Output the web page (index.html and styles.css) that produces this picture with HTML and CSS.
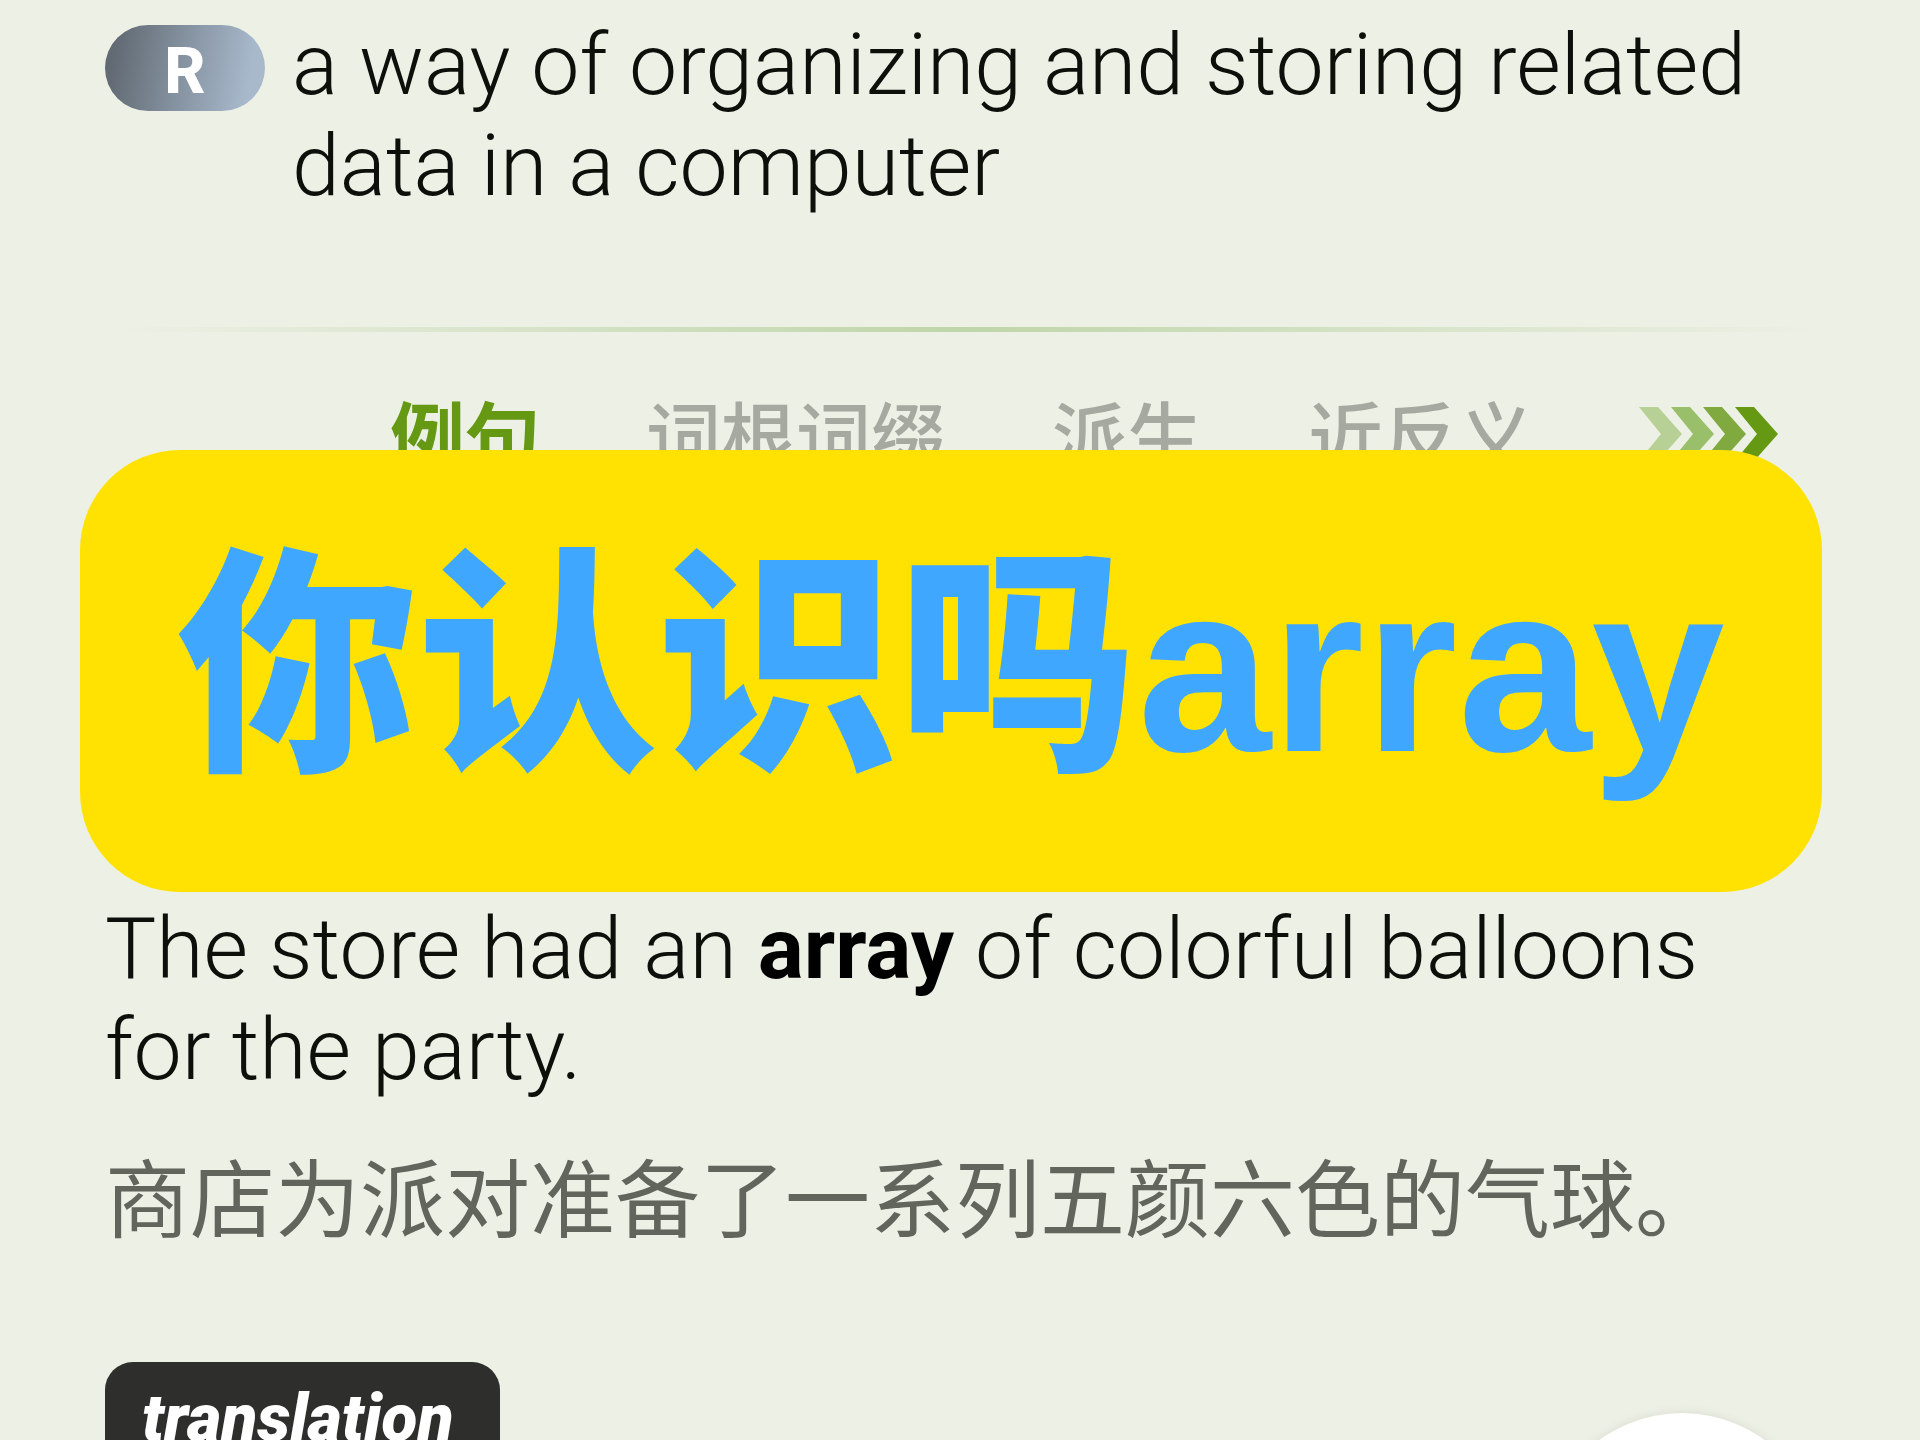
FILE: index.html
```html
<!DOCTYPE html>
<html lang="zh-CN">
<head>
<meta charset="utf-8">
<title>array</title>
<link rel="stylesheet" href="styles.css">
</head>
<body>
<main class="page">
  <section class="definition">
    <span class="badge">R</span>
    <p class="english">a way of organizing and storing related<br>data in a computer</p>
  </section>
  <hr class="divider">
  <section class="details">
    <nav class="tabs">
      <button class="tab tab-active" type="button">例句</button>
      <button class="tab" type="button">词根词缀</button>
      <button class="tab" type="button">派生</button>
      <button class="tab" type="button">近反义</button>
      <button class="more" type="button" aria-label="更多">
        <svg class="chevrons" viewBox="0 0 140 54" width="140" height="54" aria-hidden="true">
          <path fill="#b7d096" d="M0 0h19l24 27-24 27H0l22-27z"/>
          <path fill="#9abf6b" d="M32 0h19l24 27-24 27H32l22-27z"/>
          <path fill="#80aa40" d="M64 0h19l24 27-24 27H64l22-27z"/>
          <path fill="#659913" d="M96 0h19l24 27-24 27H96l22-27z"/>
        </svg>
      </button>
    </nav>
    <h1 class="banner">你认识吗array</h1>
  </section>
  <section class="example">
    <p class="english">The store had an <strong>array</strong> of colorful balloons<br>for the party.</p>
    <p class="chinese">商店为派对准备了一系列五颜六色的气球。</p>
  </section>
  <span class="tag">translation</span>
</main>
<button class="floating" type="button" aria-label="菜单"></button>
</body>
</html>
```
FILE: styles.css
```css
* {
  box-sizing: border-box;
}

body {
  margin: 0;
  height: 100vh;
  overflow: hidden;
  background: #edf0e5;
  color: #0c0f0a;
  font-family: Roboto, "Noto Sans CJK SC", sans-serif;
}

p,
h1 {
  margin: 0;
}

button {
  padding: 0;
  border: 0;
  background: none;
  font: inherit;
}

.page {
  padding: 14px 105px 0;
}

.definition {
  display: flex;
  align-items: flex-start;
  gap: 27px;
}

.badge {
  flex: none;
  width: 160px;
  height: 86px;
  margin-top: 11px;
  border-radius: 43px;
  background: linear-gradient(100deg, #626b74 8%, #a8b9cc 88%);
  color: #fff;
  font-size: 64px;
  font-weight: 800;
  line-height: 94px;
  text-align: center;
}

.english {
  font-size: 86px;
  font-weight: 300;
  line-height: 101px;
  white-space: nowrap;
}

.english strong {
  color: #000;
  font-weight: 700;
}

.divider {
  height: 5px;
  margin: 111px 0 0;
  border: 0;
  background: linear-gradient(90deg, transparent 1%, #bfd5aa 50%, transparent);
}

.details {
  position: relative;
  height: 566px;
  padding-top: 60px;
}

.tabs {
  display: flex;
  justify-content: flex-end;
  align-items: center;
  gap: 106px;
  padding-right: 36px;
}

.tab {
  padding-top: 10px;
  color: #a6a99f;
  font-size: 75px;
  font-weight: 500;
  line-height: 74px;
}

.tab-active {
  color: #659913;
  font-weight: 700;
}

.more,
.chevrons {
  display: block;
}

.banner {
  position: absolute;
  top: 118px;
  left: -25px;
  right: -7px;
  height: 442px;
  border-radius: 100px;
  background: #ffe202;
  color: #40a7ff;
  font-family: "Liberation Sans", "Noto Sans CJK SC", sans-serif;
  font-size: 240px;
  font-weight: 900;
  line-height: 436px;
  text-align: center;
  white-space: nowrap;
}

.chinese {
  margin-top: 52px;
  color: #62655c;
  font-size: 85px;
  line-height: 101px;
  white-space: nowrap;
}

.tag {
  display: block;
  width: fit-content;
  margin-top: 109px;
  padding: 20px 46px 40px 37px;
  border-radius: 28px;
  background: #2e2e2c;
  color: #fff;
  font-size: 66px;
  font-style: italic;
  font-weight: 900;
  line-height: 74px;
}

.floating {
  position: fixed;
  right: 98px;
  bottom: -253px;
  width: 280px;
  height: 280px;
  border-radius: 50%;
  background: #fff;
  box-shadow: 0 0 10px #d9dccf;
}
```
